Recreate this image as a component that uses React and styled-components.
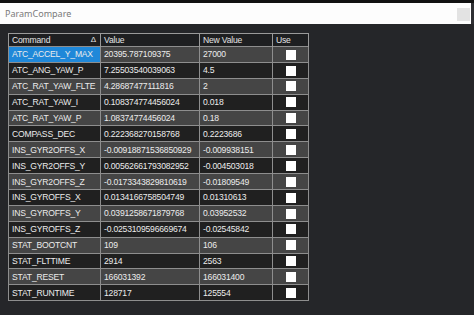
import React from "react";
import styled, { createGlobalStyle } from "styled-components";

const Global = createGlobalStyle`
  html, body { margin: 0; padding: 0; background: #252629; }
  body { width: 474px; height: 315px; overflow: hidden; font-family: "Liberation Sans", Arial, sans-serif; }
`;

const Screen = styled.div`
  width: 474px;
  height: 315px;
  display: flex;
  flex-direction: column;
  background: #252629;
`;

const TopStrip = styled.div`
  height: 3px;
  background: #111;
  flex: none;
`;

const TitleRow = styled.div`
  display: flex;
  height: 21px;
  flex: none;
`;

const TitleBar = styled.div`
  flex: 1;
  background: #fdfdfd;
  display: flex;
  align-items: center;
  justify-content: space-between;
  padding: 0 1px 0 5px;
  font-family: "Noto Sans", sans-serif;
  font-size: 9px;
  color: #7a7a7a;
`;

const CloseBtn = styled.div`
  width: 13px;
  height: 13px;
  background: #e3e3e3;
  margin-top: 2px;
`;

const SideStrip = styled.div`
  width: 3px;
  background: #2e2f33;
`;

const Body = styled.div`
  flex: 1;
  padding: 9px 0 0 8px;
`;

const Table = styled.table`
  border-collapse: collapse;
  table-layout: fixed;
  width: 300px;
  font-size: 8.6px;
  letter-spacing: -0.2px;
  color: #ececec;
`;

const Th = styled.th`
  height: 12px;
  padding: 0 0 0 3px;
  background: #1e1f21;
  border: 1px solid #9a9a9a;
  border-bottom: none;
  ${(p) => (p.$first ? "" : "border-left: 1px solid #c8c8c8;")}
  text-align: left;
  font-weight: normal;
  color: #e4e4e4;
  white-space: nowrap;
  overflow: hidden;
  line-height: 12px;
`;

const SortGlyph = styled.span`
  float: right;
  margin-right: 4px;
  font-size: 8px;
`;

const Td = styled.td`
  height: 14.9px;
  padding: 0 0 0 3px;
  border: 1px solid #8e8e8e;
  background: ${(p) => (p.$selected ? "#1f88d9" : p.$odd ? "#454545" : "#202020")};
  white-space: nowrap;
  overflow: hidden;
  line-height: 14px;
`;

const CheckCell = styled(Td)`
  padding: 0;
  text-align: center;
`;

const Box = styled.span`
  display: inline-block;
  width: 10px;
  height: 10px;
  background: #ffffff;
  vertical-align: middle;
  margin-top: -1px;
`;

const rows = [
  ["ATC_ACCEL_Y_MAX", "20395.787109375", "27000"],
  ["ATC_ANG_YAW_P", "7.25503540039063", "4.5"],
  ["ATC_RAT_YAW_FLTE", "4.28687477111816", "2"],
  ["ATC_RAT_YAW_I", "0.108374774456024", "0.018"],
  ["ATC_RAT_YAW_P", "1.08374774456024", "0.18"],
  ["COMPASS_DEC", "0.222368270158768", "0.2223686"],
  ["INS_GYR2OFFS_X", "-0.00918871536850929", "-0.009938151"],
  ["INS_GYR2OFFS_Y", "0.00562661793082952", "-0.004503018"],
  ["INS_GYR2OFFS_Z", "-0.0173343829810619", "-0.01809549"],
  ["INS_GYROFFS_X", "0.0134166758504749", "0.01310613"],
  ["INS_GYROFFS_Y", "0.0391258671879768", "0.03952532"],
  ["INS_GYROFFS_Z", "-0.0253109596669674", "-0.02545842"],
  ["STAT_BOOTCNT", "109", "106"],
  ["STAT_FLTTIME", "2914", "2563"],
  ["STAT_RESET", "166031392", "166031400"],
  ["STAT_RUNTIME", "128717", "125554"],
];

export default function App() {
  return (
    <Screen>
      <Global />
      <TopStrip />
      <TitleRow>
        <TitleBar>
          <span>ParamCompare</span>
          <CloseBtn />
        </TitleBar>
        <SideStrip />
      </TitleRow>
      <Body>
        <Table>
          <colgroup>
            <col style={{ width: 92 }} />
            <col style={{ width: 99 }} />
            <col style={{ width: 73 }} />
            <col style={{ width: 36 }} />
          </colgroup>
          <thead>
            <tr>
              <Th $first>
                Command<SortGlyph>Δ</SortGlyph>
              </Th>
              <Th>Value</Th>
              <Th>New Value</Th>
              <Th>Use</Th>
            </tr>
          </thead>
          <tbody>
            {rows.map((r, i) => {
              const odd = i % 2 === 0;
              return (
                <tr key={r[0]}>
                  <Td $odd={odd} $selected={i === 0}>{r[0]}</Td>
                  <Td $odd={odd}>{r[1]}</Td>
                  <Td $odd={odd}>{r[2]}</Td>
                  <CheckCell $odd={odd}>
                    <Box />
                  </CheckCell>
                </tr>
              );
            })}
          </tbody>
        </Table>
      </Body>
    </Screen>
  );
}
